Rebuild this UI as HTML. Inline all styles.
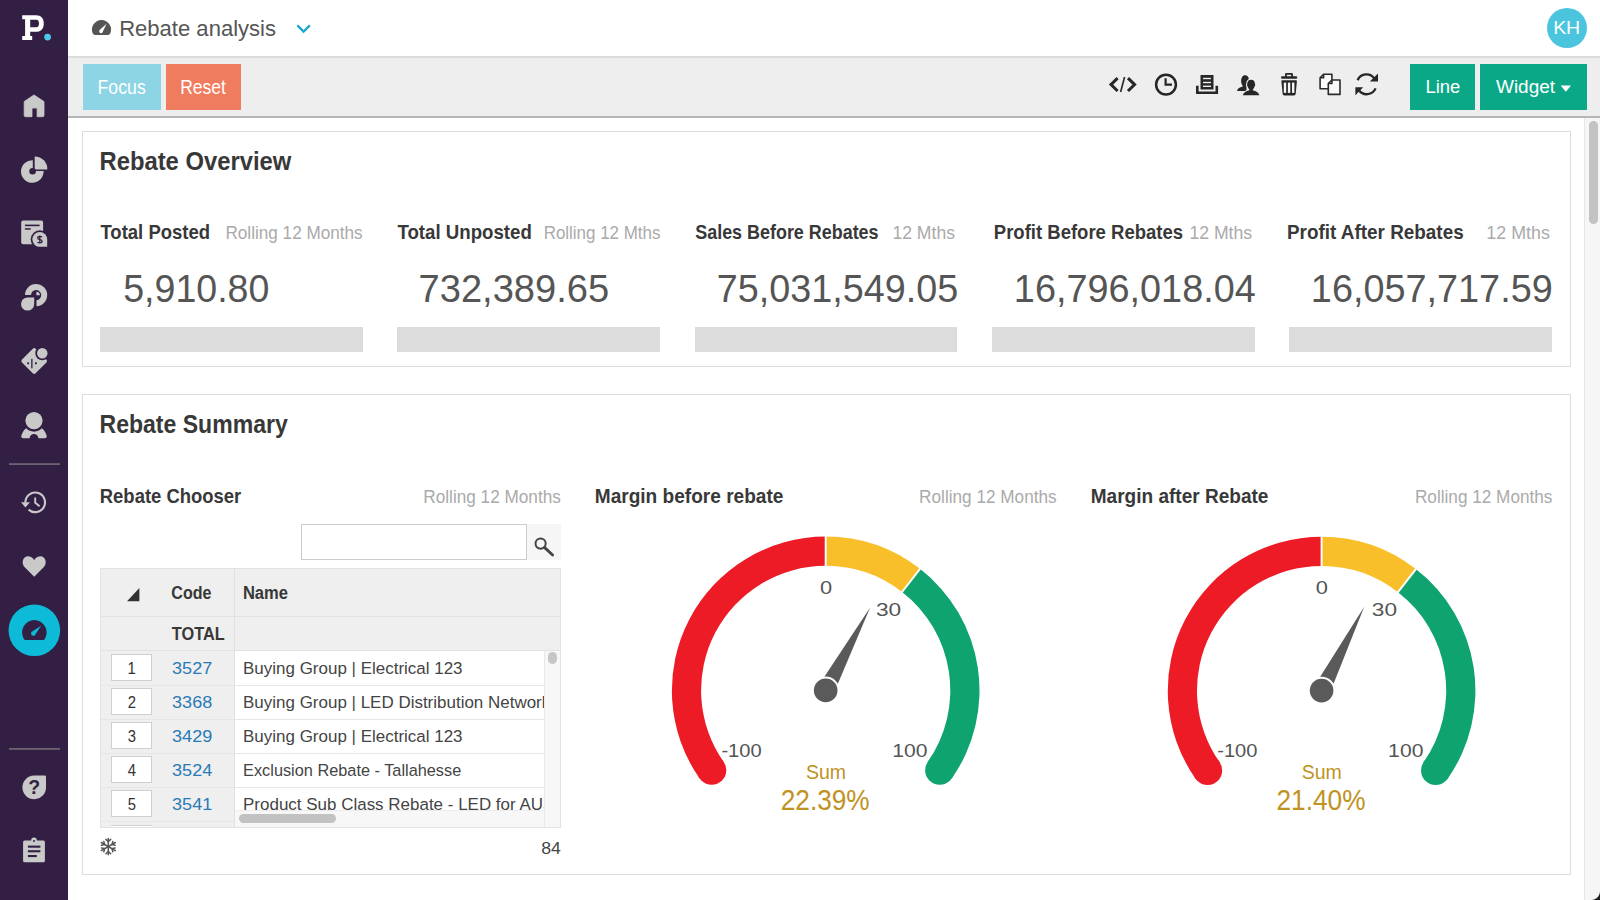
<!DOCTYPE html>
<html>
<head>
<meta charset="utf-8">
<title>Rebate analysis</title>
<style>
html,body{margin:0;padding:0;}
body{width:1600px;height:900px;overflow:hidden;position:relative;background:#fff;font-family:"Liberation Sans",sans-serif;}
.a{position:absolute;box-sizing:border-box;}
#overlay{position:absolute;left:0;top:0;width:1600px;height:900px;}
#overlay text{font-family:"Liberation Sans",sans-serif;white-space:pre;}
</style>
</head>
<body>
<!-- sidebar -->
<div class="a" style="left:0;top:0;width:68px;height:900px;background:#331f44;"></div>
<!-- header -->
<div class="a" style="left:68px;top:56px;width:1532px;height:2px;background:#dcdcdc;"></div>
<div class="a" style="left:68px;top:58px;width:1532px;height:58px;background:#eeeeee;"></div>
<div class="a" style="left:68px;top:116px;width:1532px;height:2px;background:#b4b6b9;"></div>
<div class="a" style="left:83px;top:64px;width:78px;height:46px;background:#8dd4e4;"></div>
<div class="a" style="left:166px;top:64px;width:75px;height:46px;background:#f07c60;"></div>
<div class="a" style="left:1410px;top:64px;width:65px;height:46px;background:#0aa887;"></div>
<div class="a" style="left:1480px;top:64px;width:107px;height:46px;background:#0aa887;"></div>
<div class="a" style="left:1547px;top:8px;width:40px;height:40px;border-radius:50%;background:#4bc4de;"></div>
<!-- right scrollbar -->
<div class="a" style="left:1584px;top:118px;width:16px;height:782px;background:#f6f6f6;border-left:1px solid #e6e6e6;"></div>
<div class="a" style="left:1589px;top:121px;width:9px;height:103px;border-radius:5px;background:#c3c3c3;"></div>
<!-- panel 1 -->
<div class="a" style="left:82px;top:131px;width:1489px;height:236px;border:1px solid #dddddd;"></div>
<div class="a" style="left:100px;top:327px;width:263px;height:25px;background:#dcdcdc;"></div>
<div class="a" style="left:397px;top:327px;width:263px;height:25px;background:#dcdcdc;"></div>
<div class="a" style="left:695px;top:327px;width:262px;height:25px;background:#dcdcdc;"></div>
<div class="a" style="left:992px;top:327px;width:263px;height:25px;background:#dcdcdc;"></div>
<div class="a" style="left:1289px;top:327px;width:263px;height:25px;background:#dcdcdc;"></div>
<!-- panel 2 -->
<div class="a" style="left:82px;top:394px;width:1489px;height:481px;border:1px solid #dddddd;"></div>
<!-- search -->
<div class="a" style="left:526px;top:524px;width:35px;height:36px;background:#f6f6f6;"></div>
<div class="a" style="left:301px;top:524px;width:226px;height:36px;border:1px solid #cccccc;background:#fff;"></div>
<!-- table -->
<div class="a" style="left:100px;top:568px;width:461px;height:260px;border:1px solid #e2e2e2;background:#efefef;"></div>
<div class="a" style="left:235px;top:651px;width:309px;height:159px;background:#fff;"></div>
<div class="a" style="left:544px;top:651px;width:16px;height:176px;background:#f7f7f7;border-left:1px solid #e8e8e8;"></div>
<div class="a" style="left:235px;top:810px;width:309px;height:17px;background:#f7f7f7;border-top:1px solid #ececec;"></div>
<div class="a" style="left:548px;top:652px;width:9px;height:12px;border-radius:5px;background:#c6c6c6;"></div>
<div class="a" style="left:239px;top:814px;width:97px;height:9px;border-radius:5px;background:#c2c2c2;"></div>
<div class="a" style="left:234px;top:569px;width:1px;height:258px;background:#e0e0e0;"></div>
<div class="a" style="left:101px;top:616px;width:459px;height:1px;background:#e2e2e2;"></div>
<div class="a" style="left:101px;top:650px;width:459px;height:1px;background:#e2e2e2;"></div>
<div class="a" style="left:101px;top:685px;width:443px;height:1px;background:#e6e6e6;"></div>
<div class="a" style="left:101px;top:719px;width:443px;height:1px;background:#e6e6e6;"></div>
<div class="a" style="left:101px;top:753px;width:443px;height:1px;background:#e6e6e6;"></div>
<div class="a" style="left:101px;top:787px;width:443px;height:1px;background:#e6e6e6;"></div>
<div class="a" style="left:101px;top:821px;width:134px;height:1px;background:#e6e6e6;"></div>
<div class="a" style="left:111px;top:654px;width:41px;height:27px;border:1px solid #cfcfcf;background:#fff;"></div>
<div class="a" style="left:111px;top:688px;width:41px;height:27px;border:1px solid #cfcfcf;background:#fff;"></div>
<div class="a" style="left:111px;top:722px;width:41px;height:27px;border:1px solid #cfcfcf;background:#fff;"></div>
<div class="a" style="left:111px;top:756px;width:41px;height:27px;border:1px solid #cfcfcf;background:#fff;"></div>
<div class="a" style="left:111px;top:790px;width:41px;height:27px;border:1px solid #cfcfcf;background:#fff;"></div>
<div class="a" style="left:111px;top:825px;width:41px;height:2px;border-top:1px solid #cfcfcf;background:#fff;"></div>

<svg id="overlay" width="1600" height="900" viewBox="0 0 1600 900">
<defs>
<clipPath id="namesclip"><rect x="235" y="651" width="309" height="159"/></clipPath>
</defs>
<!-- logo -->
<path fill="#fff" fill-rule="evenodd" d="M22.2 15.3 H36 C41.2 15.3 43.8 18.6 43.8 23.5 C43.8 28.5 41.2 31.8 36 31.8 H30.2 V36 H32.2 V40 H22.2 V36 H25.1 V19.3 H22.2 Z M30.2 19.8 H36.2 C38.2 19.8 39 21.3 39 23.5 C39 25.7 38.2 27.2 36.2 27.2 H30.2 Z"/>
<circle cx="47.6" cy="37.1" r="3.4" fill="#4dc8e6"/>
<!-- sidebar icons -->
<g fill="#c9c9c9">
 <!-- home -->
 <path d="M34 94.9 L44 101.6 V115.2 Q44 116.7 42.5 116.7 H37.1 V108 H32 V116.7 H25.7 Q24.2 116.7 24.2 115.2 V101.6 Z" stroke="#c9c9c9" stroke-width="0.8" stroke-linejoin="round"/>
 <!-- pie -->
 <path d="M32.8 160.2 A11.3 11.3 0 1 0 43.6 171.1 H32.8 Z"/>
 <path d="M34.7 156.4 A12.6 12.6 0 0 1 47.3 169.6 H34.7 Z"/>
 <!-- invoice -->
 <path d="M23.2 220.4 H41.1 Q43.1 220.4 43.1 222.4 V242.2 Q43.1 244.2 41.1 244.2 H23.2 Q21.2 244.2 21.2 242.2 V222.4 Q21.2 220.4 23.2 220.4 Z"/>
 <circle cx="39.8" cy="239.4" r="9.1" fill="#331f44"/>
 <path d="M47.2 239.4 A7.4 7.4 0 1 0 39.8 246.8 H47.2 Z"/>
 <!-- rings -->
 <path d="M25 295.1 A11.1 11.1 0 1 1 36.5 306.2 V300.2 A5.1 5.1 0 1 0 31 295.1 Z"/>
 <path d="M36.4 295.2 V291.7 A3.5 3.5 0 0 1 39.9 295.2 Z"/>
 <path d="M34.2 297.4 V304 A6.6 6.6 0 1 1 27.6 297.4 Z"/>
 <!-- tag -->
 <path d="M32.8 348.8 Q34.2 347.4 35.6 348.8 L46.4 359.6 Q47.8 361 46.4 362.4 L35.6 373.2 Q34.2 374.6 32.8 373.2 L22 362.4 Q20.6 361 22 359.6 Z"/>
 <circle cx="42.3" cy="353.2" r="7" fill="#331f44"/>
 <circle cx="42.3" cy="353.2" r="5.2"/>
 <!-- person -->
 <circle cx="34" cy="420.6" r="8.6"/>
 <path d="M23.5 438.3 Q21 438.3 21.3 435.8 Q23 430.5 26.2 428.3 A10.8 10.8 0 0 0 41.8 428.3 Q45 430.5 46.7 435.8 Q47 438.3 44.5 438.3 H38.4 A4.4 4.4 0 0 0 29.6 438.3 Z"/>
 <!-- heart -->
 <path d="M34.2 576.8 L24.5 567 C21.2 563.7 22.4 556.3 28.3 556.3 C31.4 556.3 33.1 558.6 34.2 560.2 C35.3 558.6 37 556.3 40.1 556.3 C46 556.3 47.2 563.7 43.9 567 Z"/>
 <!-- help -->
 <path d="M34 775.6 H44.6 Q46 775.6 46 777 V787.2 A11.8 11.8 0 1 1 34 775.6 Z"/>
 <!-- clipboard -->
 <path d="M24.6 840.4 H31.2 A2.8 2.8 0 0 1 36.8 840.4 H43.4 Q44.9 840.4 44.9 841.9 V860.7 Q44.9 862.2 43.4 862.2 H24.6 Q23.1 862.2 23.1 860.7 V841.9 Q23.1 840.4 24.6 840.4 Z"/>
</g>
<!-- cut-outs in sidebar icons -->
<g fill="#331f44">
 <circle cx="32.6" cy="171.3" r="3.3"/>
 <rect x="24.9" y="224.6" width="14.7" height="1.6"/>
 <rect x="24.9" y="228.2" width="5.8" height="1.5"/>
 <circle cx="34" cy="840.9" r="1.0"/>
 <rect x="27.9" y="845.6" width="12.5" height="2.1"/>
 <rect x="27.9" y="850.2" width="12.5" height="2.1"/>
 <rect x="27.9" y="855" width="8.9" height="2.1"/>
 <circle cx="28.1" cy="363.3" r="1.1"/>
 <circle cx="35.9" cy="363.3" r="1.1"/>
 <rect x="31.2" y="358.9" width="1.3" height="9.4"/>
</g>
<path d="M39.8 235.6 V243.6 M42 237.3 Q41.6 236.4 39.9 236.4 Q37.7 236.4 37.7 238.1 Q37.7 239.5 39.9 239.7 Q42.1 239.9 42.1 241.3 Q42.1 242.9 39.8 242.9 Q38 242.9 37.6 241.9" fill="none" stroke="#331f44" stroke-width="1.3"/>
<text x="34.1" y="794.2" font-size="19.5" font-weight="700" fill="#331f44" text-anchor="middle" style="font-family:'Liberation Sans'">?</text>
<!-- history -->
<g fill="none" stroke="#c9c9c9" stroke-width="1.9">
 <path d="M25.4 502.6 A9.8 9.8 0 1 1 28.6 509.6" stroke-width="2.1"/>
 <path d="M35.2 497.4 V502.7 L39.6 506.2"/>
</g>
<path d="M21 502.2 H29.9 L25.45 507.6 Z" fill="#c9c9c9"/>
<!-- dividers -->
<rect x="9" y="463.2" width="51" height="1.8" fill="#6c6470"/>
<rect x="9" y="748" width="51" height="1.8" fill="#6c6470"/>
<!-- active -->
<circle cx="34.35" cy="630.3" r="25.8" fill="#0dbad8"/>
<path d="M26 640 Q24.2 640 23.6 638.4 A12.3 12.3 0 1 1 45.1 638.4 Q44.5 640 42.7 640 Z" fill="#331f44"/>
<path d="M41.2 625.8 L35.6 633.9 A2.3 2.3 0 1 1 32.6 631.3 Z" fill="#0dbad8"/>

<!-- header gauge icon -->
<path d="M95 35 Q93.4 35 92.8 33.6 A9.6 9.6 0 1 1 110.2 33.6 Q109.6 35 108 35 Z" fill="#555"/>
<path d="M106.6 23.8 L103 31.2 A1.9 1.9 0 1 1 100.1 29.6 Z" fill="#fff"/>
<path d="M297.4 25.4 L303.6 31.6 L309.8 25.4" fill="none" stroke="#1aa7d1" stroke-width="2.3"/>
<!-- widget caret -->
<path d="M1560.7 85.4 H1571 L1565.85 91.7 Z" fill="#fff"/>

<!-- toolbar icons -->
<g fill="none" stroke="#262626">
 <path d="M1117.6 78.2 L1111 84.6 L1117.6 91" stroke-width="3"/>
 <path d="M1128 78.2 L1134.6 84.6 L1128 91" stroke-width="3"/>
 <path d="M1124.6 77 L1120.6 92" stroke-width="1.6"/>
 <circle cx="1166" cy="84.6" r="9.9" stroke-width="2.5"/>
 <path d="M1165.6 78.2 V84.7 H1172" stroke-width="2.2"/>
 <path d="M1197.3 85.8 V92.8 H1216.8 V85.8" stroke-width="2.6"/>
</g>
<rect x="1200.5" y="75" width="13" height="14.5" fill="#262626"/>
<g fill="#eeeeee"><rect x="1203" y="77.8" width="8" height="1.4"/><rect x="1203" y="81.8" width="8" height="1.4"/><rect x="1203" y="85.6" width="8" height="1.4"/></g>
<!-- users -->
<path fill="#262626" d="M1245 75.3 C1247.3 75.3 1248.6 76.6 1248.7 78.6 L1248.6 80 C1247 80.8 1246.6 82.5 1246.6 84.3 L1246.6 86.4 C1246.3 87.6 1246.5 89.5 1246.7 91 L1237 91 C1237.6 88.5 1239.8 87.2 1242.6 86.5 L1242.6 85.5 C1242 85 1241.5 83.8 1241.3 82.6 L1241.1 81.4 C1241.2 78 1242.4 75.3 1245 75.3 Z"/>
<path fill="#262626" stroke="#eeeeee" stroke-width="2" paint-order="stroke" d="M1251.1 79.7 C1253.6 79.7 1254.8 81.2 1254.9 83.4 L1255.3 85.3 L1254.6 86.2 C1254.3 87.8 1253.4 89 1252.8 89.6 L1252.8 90.3 C1256 91 1258.8 92.5 1259.4 95.3 L1242.8 95.3 C1243.4 92.5 1246.2 91 1249.4 90.3 L1249.4 89.6 C1248.8 89 1247.9 87.8 1247.6 86.2 L1246.9 85.3 L1247.3 83.4 C1247.4 81.2 1248.6 79.7 1251.1 79.7 Z"/>
<!-- trash -->
<g fill="#262626">
 <path fill-rule="evenodd" d="M1285 76.3 V74.4 Q1285 73 1286.4 73 H1291.6 Q1293 73 1293 74.4 V76.3 H1296 Q1297.3 76.3 1297.3 77.5 Q1297.3 78.8 1296 78.8 H1282.3 Q1281 78.8 1281 77.5 Q1281 76.3 1282.3 76.3 Z M1286.8 76.3 H1291.2 V74.7 H1286.8 Z"/>
 <path d="M1282.2 80.3 H1296.1 Q1297 80.3 1296.9 81.3 L1295.7 93.8 Q1295.5 95.4 1294 95.4 H1284.3 Q1282.8 95.4 1282.6 93.8 L1281.4 81.3 Q1281.3 80.3 1282.2 80.3 Z"/>
</g>
<g fill="#f6f6f6"><rect x="1283.8" y="82.6" width="2.4" height="10.3"/><rect x="1287.9" y="82.6" width="2.4" height="10.3"/><rect x="1292" y="82.6" width="2.4" height="10.3"/></g>
<!-- copy -->
<g stroke="#2a2a2a" stroke-width="1.6" fill="#f9f9f9" stroke-linejoin="round">
 <path d="M1323.6 74.3 H1331.9 V88.7 H1320.1 V77.8 Z"/>
 <path d="M1320.1 77.8 H1323.6 V74.3" fill="none"/>
 <path d="M1331.9 80 H1340 V94.4 H1328.3 V83.5 Z"/>
 <path d="M1328.3 83.5 H1331.9 V80" fill="none"/>
</g>
<!-- refresh -->
<g fill="none" stroke="#262626" stroke-width="2.3">
 <path d="M1357.6 80.2 A9.6 9.6 0 0 1 1374.6 79"/>
 <path d="M1375.6 88.4 A9.6 9.6 0 0 1 1358.8 90"/>
</g>
<path d="M1369.8 81.6 H1378 V73.4 Z" fill="#262626"/>
<path d="M1363.2 87.2 H1355.4 V95.2 Z" fill="#262626"/>

<!-- search icon -->
<circle cx="540.6" cy="543.6" r="5.1" fill="none" stroke="#444" stroke-width="2"/>
<path d="M544.4 547.4 L552.6 555" stroke="#444" stroke-width="2.8" stroke-linecap="round"/>
<!-- sort triangle -->
<path d="M139.4 588 L127 601.2 H139.4 Z" fill="#333"/>
<!-- snowflake -->
<g stroke="#555" stroke-width="1.5" fill="none" stroke-linecap="round">
 <path d="M108.3 838.5 V854.7 M101.3 842.5 L115.3 850.6 M101.3 850.6 L115.3 842.5"/>
 <path d="M105.9 839.4 L108.3 841.6 L110.7 839.4 M105.9 853.8 L108.3 851.6 L110.7 853.8"/>
 <path d="M101.5 845.2 L104.6 844.5 L103.8 841.4 M115.1 847.9 L112 848.6 L112.8 851.7"/>
 <path d="M101.5 847.9 L104.6 848.6 L103.8 851.7 M115.1 845.2 L112 844.5 L112.8 841.4"/>
</g>

<path fill="#ed1b25" d="M699.71 778.62 A153.8 153.8 0 0 1 825.70 536.60 L825.70 565.80 A124.6 124.6 0 0 0 723.63 761.87 Z"/>
<path fill="#f9bf2b" d="M825.70 536.60 A153.8 153.8 0 0 1 919.97 568.87 L902.07 591.95 A124.6 124.6 0 0 0 825.70 565.80 Z"/>
<path fill="#0fa46f" d="M919.97 568.87 A153.8 153.8 0 0 1 951.69 778.62 L927.77 761.87 A124.6 124.6 0 0 0 902.07 591.95 Z"/>
<circle cx="711.67" cy="770.24" r="14.60" fill="#ed1b25"/>
<circle cx="939.73" cy="770.24" r="14.60" fill="#0fa46f"/>
<line x1="825.70" y1="566.80" x2="825.70" y2="535.60" stroke="#fff" stroke-width="2"/>
<line x1="901.46" y1="592.74" x2="920.58" y2="568.08" stroke="#fff" stroke-width="2"/>
<path fill="#5a5a5a" d="M870.14 607.57 L833.28 694.47 L818.12 686.33 Z"/>
<circle cx="825.7" cy="690.4" r="13.8" fill="#fff"/>
<circle cx="825.7" cy="690.4" r="11.8" fill="#5a5a5a"/>
<path fill="#ed1b25" d="M1195.61 778.82 A153.8 153.8 0 0 1 1321.60 536.80 L1321.60 566.00 A124.6 124.6 0 0 0 1219.53 762.07 Z"/>
<path fill="#f9bf2b" d="M1321.60 536.80 A153.8 153.8 0 0 1 1415.87 569.07 L1397.97 592.15 A124.6 124.6 0 0 0 1321.60 566.00 Z"/>
<path fill="#0fa46f" d="M1415.87 569.07 A153.8 153.8 0 0 1 1447.59 778.82 L1423.67 762.07 A124.6 124.6 0 0 0 1397.97 592.15 Z"/>
<circle cx="1207.57" cy="770.44" r="14.60" fill="#ed1b25"/>
<circle cx="1435.63" cy="770.44" r="14.60" fill="#0fa46f"/>
<line x1="1321.60" y1="567.00" x2="1321.60" y2="535.80" stroke="#fff" stroke-width="2"/>
<line x1="1397.36" y1="592.94" x2="1416.48" y2="568.28" stroke="#fff" stroke-width="2"/>
<path fill="#5a5a5a" d="M1364.22 606.82 L1329.27 694.50 L1313.93 686.70 Z"/>
<circle cx="1321.6" cy="690.6" r="13.8" fill="#fff"/>
<circle cx="1321.6" cy="690.6" r="11.8" fill="#5a5a5a"/>
<g><text transform="translate(119.14 36.40) scale(0.9663 1)" font-size="22.83" font-weight="400" fill="#555">Rebate analysis</text></g>
<g><text transform="translate(97.48 94.00) scale(0.9073 1)" font-size="19.57" font-weight="400" fill="#fff">Focus</text></g>
<g><text transform="translate(180.20 94.00) scale(0.8951 1)" font-size="19.57" font-weight="400" fill="#fff">Reset</text></g>
<g><text transform="translate(1425.53 93.30) scale(0.9558 1)" font-size="19.28" font-weight="400" fill="#fff">Line</text></g>
<g><text transform="translate(1496.00 93.30) scale(0.9844 1)" font-size="19.28" font-weight="400" fill="#fff">Widget</text></g>
<g><text transform="translate(1553.14 34.00) scale(1.0584 1)" font-size="18.41" font-weight="400" fill="#fff">KH</text></g>
<g><text transform="translate(99.45 169.60) scale(0.9447 1)" font-size="25.22" font-weight="700" fill="#383838">Rebate Overview</text></g>
<g><text transform="translate(100.41 239.40) scale(0.9332 1)" font-size="19.86" font-weight="700" fill="#383838">Total Posted</text></g>
<g><text transform="translate(397.41 239.40) scale(0.9406 1)" font-size="19.86" font-weight="700" fill="#383838">Total Unposted</text></g>
<g><text transform="translate(695.25 239.40) scale(0.9032 1)" font-size="19.86" font-weight="700" fill="#383838">Sales Before Rebates</text></g>
<g><text transform="translate(993.80 239.40) scale(0.9328 1)" font-size="19.86" font-weight="700" fill="#383838">Profit Before Rebates</text></g>
<g><text transform="translate(1286.97 239.40) scale(0.9515 1)" font-size="19.86" font-weight="700" fill="#383838">Profit After Rebates</text></g>
<g><text transform="translate(225.43 239.20) scale(0.9398 1)" font-size="18.26" font-weight="400" fill="#aaa">Rolling 12 Months</text></g>
<g><text transform="translate(543.64 239.20) scale(0.9293 1)" font-size="18.26" font-weight="400" fill="#aaa">Rolling 12 Mths</text></g>
<g><text transform="translate(892.38 239.20) scale(0.9643 1)" font-size="18.26" font-weight="400" fill="#aaa">12 Mths</text></g>
<g><text transform="translate(1189.38 239.20) scale(0.9659 1)" font-size="18.26" font-weight="400" fill="#aaa">12 Mths</text></g>
<g><text transform="translate(1486.36 239.20) scale(0.9770 1)" font-size="18.26" font-weight="400" fill="#aaa">12 Mths</text></g>
<g><text transform="translate(123.20 301.90) scale(0.9747 1)" font-size="38.55" font-weight="400" fill="#555">5,910.80</text></g>
<g><text transform="translate(418.60 301.90) scale(0.9877 1)" font-size="38.55" font-weight="400" fill="#555">732,389.65</text></g>
<g><text transform="translate(716.71 301.90) scale(0.9798 1)" font-size="38.55" font-weight="400" fill="#555">75,031,549.05</text></g>
<g><text transform="translate(1013.86 301.90) scale(0.9813 1)" font-size="38.55" font-weight="400" fill="#555">16,796,018.04</text></g>
<g><text transform="translate(1310.86 301.90) scale(0.9811 1)" font-size="38.55" font-weight="400" fill="#555">16,057,717.59</text></g>
<g><text transform="translate(99.50 432.80) scale(0.8836 1)" font-size="26.09" font-weight="700" fill="#383838">Rebate Summary</text></g>
<g><text transform="translate(99.80 503.00) scale(0.8964 1)" font-size="20.58" font-weight="700" fill="#383838">Rebate Chooser</text></g>
<g><text transform="translate(423.32 503.00) scale(0.9412 1)" font-size="18.26" font-weight="400" fill="#aaa">Rolling 12 Months</text></g>
<g><text transform="translate(594.76 503.00) scale(0.9277 1)" font-size="20.58" font-weight="700" fill="#383838">Margin before rebate</text></g>
<g><text transform="translate(919.12 503.00) scale(0.9419 1)" font-size="18.26" font-weight="400" fill="#aaa">Rolling 12 Months</text></g>
<g><text transform="translate(1090.76 503.00) scale(0.9256 1)" font-size="20.58" font-weight="700" fill="#383838">Margin after Rebate</text></g>
<g><text transform="translate(1414.92 503.00) scale(0.9419 1)" font-size="18.26" font-weight="400" fill="#aaa">Rolling 12 Months</text></g>
<g><text transform="translate(171.36 598.75) scale(0.9156 1)" font-size="17.54" font-weight="700" fill="#383838">Code</text></g>
<g><text transform="translate(242.92 598.75) scale(0.9441 1)" font-size="17.54" font-weight="700" fill="#383838">Name</text></g>
<g><text transform="translate(171.84 640.40) scale(0.8747 1)" font-size="18.70" font-weight="700" fill="#383838">TOTAL</text></g>
<g><text transform="translate(541.29 854.00) scale(1.0168 1)" font-size="17.39" font-weight="400" fill="#444">84</text></g>
<g><text transform="translate(127.46 674.20) scale(0.9300 1)" font-size="15.94" font-weight="400" fill="#333">1</text></g>
<g><text transform="translate(172.07 674.20) scale(1.0558 1)" font-size="17.10" font-weight="400" fill="#2a7ab6">3527</text></g>
<g clip-path="url(#namesclip)"><text transform="translate(243.04 674.20) scale(0.9931 1)" font-size="17.10" font-weight="400" fill="#444">Buying Group | Electrical 123</text></g>
<g><text transform="translate(127.65 708.25) scale(0.9300 1)" font-size="15.94" font-weight="400" fill="#333">2</text></g>
<g><text transform="translate(172.07 708.25) scale(1.0558 1)" font-size="17.10" font-weight="400" fill="#2a7ab6">3368</text></g>
<g clip-path="url(#namesclip)"><text transform="translate(243.04 708.25) scale(0.9931 1)" font-size="17.10" font-weight="400" fill="#444">Buying Group | LED Distribution Network</text></g>
<g><text transform="translate(127.72 742.30) scale(0.9300 1)" font-size="15.94" font-weight="400" fill="#333">3</text></g>
<g><text transform="translate(172.07 742.30) scale(1.0558 1)" font-size="17.10" font-weight="400" fill="#2a7ab6">3429</text></g>
<g clip-path="url(#namesclip)"><text transform="translate(243.04 742.30) scale(0.9931 1)" font-size="17.10" font-weight="400" fill="#444">Buying Group | Electrical 123</text></g>
<g><text transform="translate(127.72 776.35) scale(0.9300 1)" font-size="15.94" font-weight="400" fill="#333">4</text></g>
<g><text transform="translate(172.07 776.35) scale(1.0558 1)" font-size="17.10" font-weight="400" fill="#2a7ab6">3524</text></g>
<g clip-path="url(#namesclip)"><text transform="translate(243.09 776.35) scale(0.9541 1)" font-size="17.10" font-weight="400" fill="#444">Exclusion Rebate - Tallahesse</text></g>
<g><text transform="translate(127.69 810.40) scale(0.9300 1)" font-size="15.94" font-weight="400" fill="#333">5</text></g>
<g><text transform="translate(172.07 810.40) scale(1.0558 1)" font-size="17.10" font-weight="400" fill="#2a7ab6">3541</text></g>
<g clip-path="url(#namesclip)"><text transform="translate(243.04 810.40) scale(0.9931 1)" font-size="17.10" font-weight="400" fill="#444">Product Sub Class Rebate - LED for AUS Network</text></g>
<g><text transform="translate(820.04 594.00) scale(1.1874 1)" font-size="18.41" font-weight="400" fill="#555">0</text></g>
<g><text transform="translate(876.01 615.80) scale(1.2031 1)" font-size="18.84" font-weight="400" fill="#555">30</text></g>
<g><text transform="translate(721.39 757.20) scale(1.0696 1)" font-size="18.84" font-weight="400" fill="#555">-100</text></g>
<g><text transform="translate(892.31 757.20) scale(1.1247 1)" font-size="18.84" font-weight="400" fill="#555">100</text></g>
<g><text transform="translate(805.92 779.20) scale(0.9347 1)" font-size="20.87" font-weight="400" fill="#c0921f">Sum</text></g>
<g><text transform="translate(780.69 810.00) scale(0.9146 1)" font-size="28.70" font-weight="400" fill="#c0921f">22.39%</text></g>
<g><text transform="translate(1315.84 594.00) scale(1.1874 1)" font-size="18.41" font-weight="400" fill="#555">0</text></g>
<g><text transform="translate(1371.81 615.80) scale(1.2031 1)" font-size="18.84" font-weight="400" fill="#555">30</text></g>
<g><text transform="translate(1217.19 757.20) scale(1.0696 1)" font-size="18.84" font-weight="400" fill="#555">-100</text></g>
<g><text transform="translate(1388.11 757.20) scale(1.1247 1)" font-size="18.84" font-weight="400" fill="#555">100</text></g>
<g><text transform="translate(1301.72 779.20) scale(0.9347 1)" font-size="20.87" font-weight="400" fill="#c0921f">Sum</text></g>
<g><text transform="translate(1276.49 810.00) scale(0.9146 1)" font-size="28.70" font-weight="400" fill="#c0921f">21.40%</text></g>
</svg>
<div class="a" style="left:1591px;top:891px;width:9px;height:9px;background:radial-gradient(circle at 0 0, rgba(0,0,0,0) 8.5px, #1e1e1e 9.5px);"></div>
</body>
</html>
